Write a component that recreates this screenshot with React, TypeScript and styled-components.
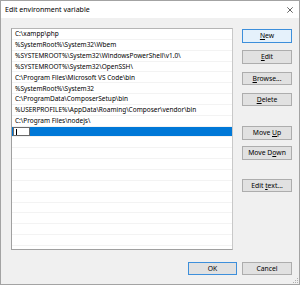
import React from "react";
import styled, { createGlobalStyle } from "styled-components";

const GlobalStyle = createGlobalStyle`
  html, body {
    margin: 0;
    padding: 0;
    background: #f0f0f0;
  }
  body {
    font-family: "Noto Sans", "Open Sans", sans-serif;
    color: #000;
  }
`;

const Window = styled.div`
  position: relative;
  box-sizing: border-box;
  width: 300px;
  height: 285px;
  border: 1px solid #a3a3a3;
  background: #f0f0f0;
  display: flex;
  flex-direction: column;
  overflow: hidden;
`;

const TitleBar = styled.div`
  height: 17px;
  flex: none;
  background: #fff;
  display: flex;
  align-items: center;
  justify-content: space-between;
  padding: 0 6px 0 4px;
  font-size: 7px;
`;

const Body = styled.div`
  display: flex;
  flex-direction: column;
  padding: 10px 7px 0 10px;
`;

const MainRow = styled.div`
  display: flex;
  gap: 9px;
`;

const ListBox = styled.div`
  box-sizing: border-box;
  width: 222px;
  height: 222px;
  background: #fff;
  border: 1px solid #a0a0a0;
  border-top-color: #b5b5b5;
  border-right-color: #c8c8c8;
  overflow: hidden;
`;

const Row = styled.div<{ $selected?: boolean }>`
  box-sizing: border-box;
  height: 10.85px;
  display: flex;
  align-items: center;
  border-bottom: 1px solid #f3f3f3;
  font-size: 6.5px;
  white-space: nowrap;
  background: ${(p) => (p.$selected ? "#0078d7" : "transparent")};
  padding-left: ${(p) => (p.$selected ? "1px" : "3px")};
`;

const EditBox = styled.div`
  box-sizing: border-box;
  width: 17px;
  height: 9px;
  background: #fff;
  border: 1px solid #6a6a6a;
  display: flex;
  align-items: center;
  padding-left: 2px;
`;

const Caret = styled.span`
  width: 1px;
  height: 6px;
  background: #000;
`;

const ButtonColumn = styled.div`
  display: flex;
  flex-direction: column;
  padding-top: 1px;
`;

const Button = styled.div<{ $gap?: number; $focus?: boolean; $default?: boolean; $w?: number }>`
  box-sizing: border-box;
  width: ${(p) => p.$w ?? 50}px;
  height: 13.5px;
  flex: none;
  text-align: center;
  line-height: 11.5px;
  white-space: nowrap;
  font-size: 6.8px;
  background: ${(p) => (p.$focus ? "#e5f1fb" : "#e1e1e1")};
  border: 1px solid ${(p) => (p.$focus || p.$default ? "#3d8fdb" : "#adadad")};
  margin-bottom: ${(p) => p.$gap ?? 0}px;

  u {
    text-decoration-thickness: 0.6px;
    text-underline-offset: 1px;
  }
`;

const Footer = styled.div`
  display: flex;
  justify-content: flex-end;
  gap: 5px;
  margin-top: 11.5px;
`;

const Grip = styled.svg`
  position: absolute;
  right: 1px;
  bottom: 1px;
`;

const paths = [
  "C:\\xampp\\php",
  "%SystemRoot%\\System32\\Wbem",
  "%SYSTEMROOT%\\System32\\WindowsPowerShell\\v1.0\\",
  "%SYSTEMROOT%\\System32\\OpenSSH\\",
  "C:\\Program Files\\Microsoft VS Code\\bin",
  "%SystemRoot%\\System32",
  "C:\\ProgramData\\ComposerSetup\\bin",
  "%USERPROFILE%\\AppData\\Roaming\\Composer\\vendor\\bin",
  "C:\\Program Files\\nodejs\\",
];

export default function App() {
  const empty = Array.from({ length: 11 });
  return (
    <>
      <GlobalStyle />
      <Window>
        <TitleBar>
          <span>Edit environment variable</span>
          <svg width="6" height="6" viewBox="0 0 6 6">
            <path d="M0.3 0.3 L5.7 5.7 M5.7 0.3 L0.3 5.7" stroke="#222" strokeWidth="0.7" />
          </svg>
        </TitleBar>
        <Body>
          <MainRow>
            <ListBox>
              {paths.map((p) => (
                <Row key={p}>{p}</Row>
              ))}
              <Row $selected>
                <EditBox>
                  <Caret />
                </EditBox>
              </Row>
              {empty.map((_, i) => (
                <Row key={i} />
              ))}
            </ListBox>
            <ButtonColumn>
              <Button $focus $gap={7.8}>
                <u>N</u>ew
              </Button>
              <Button $gap={7.8}>
                <u>E</u>dit
              </Button>
              <Button $gap={7.8}>
                <u>B</u>rowse...
              </Button>
              <Button $gap={19.7}>
                <u>D</u>elete
              </Button>
              <Button $gap={6.8}>
                Move <u>U</u>p
              </Button>
              <Button $gap={18.8}>
                Move D<u>o</u>wn
              </Button>
              <Button>
                Edit <u>t</u>ext...
              </Button>
            </ButtonColumn>
          </MainRow>
          <Footer>
            <Button $default $w={49}>
              OK
            </Button>
            <Button>Cancel</Button>
          </Footer>
        </Body>
        <Grip width="5" height="5" viewBox="0 0 5 5">
          <rect x="4" y="0" width="1" height="1" fill="#b0b0b0" />
          <rect x="2" y="2" width="1" height="1" fill="#b0b0b0" />
          <rect x="4" y="2" width="1" height="1" fill="#b0b0b0" />
          <rect x="0" y="4" width="1" height="1" fill="#b0b0b0" />
          <rect x="2" y="4" width="1" height="1" fill="#b0b0b0" />
          <rect x="4" y="4" width="1" height="1" fill="#b0b0b0" />
        </Grip>
      </Window>
    </>
  );
}
